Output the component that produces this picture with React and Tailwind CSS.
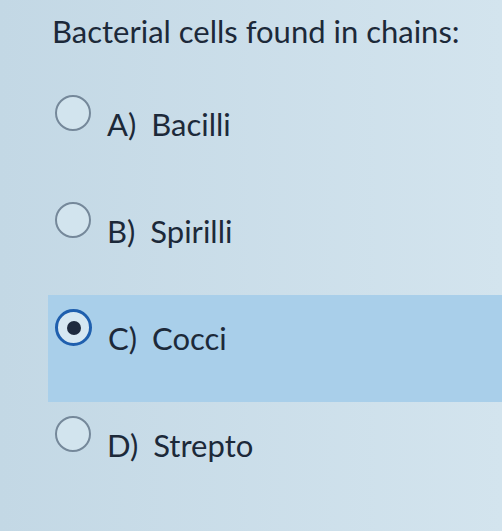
import React from "react";

const options = [
  { label: "A)", text: "Bacilli", selected: false },
  { label: "B)", text: "Spirilli", selected: false },
  { label: "C)", text: "Cocci", selected: true },
  { label: "D)", text: "Strepto", selected: false },
];

function Radio({ selected }) {
  if (selected) {
    return (
      <div className="mt-[14px] w-[37px] h-[37px] rounded-full border-[3px] border-[#1f5fae] bg-[#d6e7f2] flex items-center justify-center shrink-0">
        <div className="w-[14px] h-[14px] rounded-full bg-[#1e2a3f]" />
      </div>
    );
  }
  return (
    <div className="mt-[14px] w-[36px] h-[36px] rounded-full border-2 border-[#75889a] bg-[#d2e4ee] shrink-0" />
  );
}

export default function App() {
  return (
    <div
      className="w-[502px] h-[531px] bg-gradient-to-r from-[#c3d8e5] to-[#d3e4ee] text-[#1c2939] overflow-hidden"
      style={{ fontFamily: "Lato, 'Open Sans', sans-serif" }}
    >
      <div className="pl-[52px] pt-[12px] text-[31px] leading-[38px]">
        Bacterial cells found in chains:
      </div>
      <div className="mt-[31px] flex flex-col">
        {options.map((o) => (
          <div
            key={o.label}
            className={
              "ml-[48px] h-[107px] flex items-start pl-[7px] gap-[16px] " +
              (o.selected ? "bg-[#a9cfea]" : "")
            }
          >
            <Radio selected={o.selected} />
            <div className="mt-[24px] text-[31px] leading-[38px] flex gap-[15px]">
              <span>{o.label}</span>
              <span>{o.text}</span>
            </div>
          </div>
        ))}
      </div>
    </div>
  );
}
